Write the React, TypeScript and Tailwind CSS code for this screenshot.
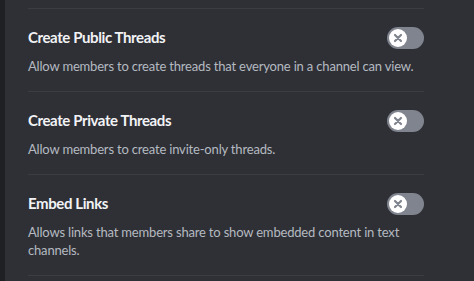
const settings = [
  {
    title: "Create Public Threads",
    desc: "Allow members to create threads that everyone in a channel can view.",
  },
  {
    title: "Create Private Threads",
    desc: "Allow members to create invite-only threads.",
  },
  {
    title: "Embed Links",
    desc: "Allows links that members share to show embedded content in text channels.",
  },
];

function Toggle() {
  return (
    <div className="flex h-[22px] w-[37px] shrink-0 items-center rounded-full bg-[#80848e] px-[2px]">
      <div className="flex h-[18px] w-[18px] items-center justify-center rounded-full bg-white">
        <svg width="10" height="10" viewBox="0 0 10 10">
          <path
            d="M2 2 L8 8 M8 2 L2 8"
            stroke="#80848e"
            strokeWidth="2.2"
            strokeLinecap="round"
          />
        </svg>
      </div>
    </div>
  );
}

export default function App() {
  return (
    <div className="flex h-[281px] w-[474px] overflow-hidden bg-[#2e3035] font-['Lato',sans-serif]">
      <div className="w-[5px] shrink-0 bg-[#1f2023]" />
      <div className="flex-1 pl-[23px] pr-[50px] pt-[8px]">
        {settings.map((s) => (
          <div key={s.title} className="border-t border-[#3b3d43] pb-[16px] pt-[18px]">
            <div className="flex h-[22px] items-center justify-between">
              <h3 className="mb-[3px] text-[15px] font-bold leading-[20px] tracking-[-0.4px] text-[#f2f3f5]">
                {s.title}
              </h3>
              <Toggle />
            </div>
            <p className="mt-[8px] text-[13px] leading-[18px] tracking-[-0.18px] text-[#b5bac1]">
              {s.desc}
            </p>
          </div>
        ))}
        <div className="border-t border-[#3b3d43]" />
      </div>
    </div>
  );
}
